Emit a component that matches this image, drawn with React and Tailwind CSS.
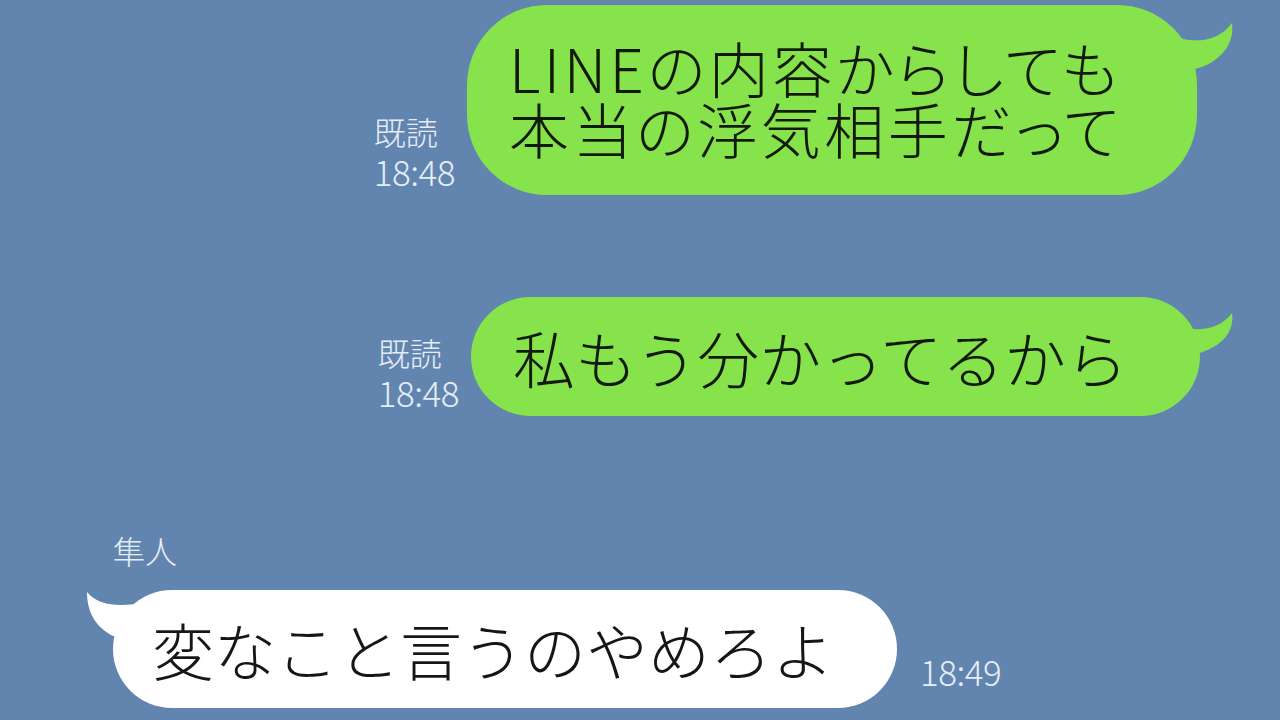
const Stamp = ({ read = false, time, className = '' }) => (
  <div className={`flex flex-col text-[#e6edf6] font-light ${className}`}>
    {read && <span className="text-[32px] leading-[39px]">既読</span>}
    <span className="text-[35px] leading-[39px] tracking-[-0.5px]">{time}</span>
  </div>
);

const RightTail = ({ d }) => (
  <svg className="absolute top-0 right-[-40px] w-[80px] h-[80px]" viewBox="0 0 80 80">
    <path d={d} fill="#86e34b" />
  </svg>
);

export default function App() {
  return (
    <div className="w-[1280px] h-[720px] overflow-hidden bg-[#6285b0] flex flex-col pt-[5px] font-['Noto_Sans_CJK_JP','Noto_Sans',sans-serif]">
      <div className="flex justify-end items-end pr-[83px]">
        <Stamp read time="18:48" className="mr-[12px] mb-[5px]" />
        <div className="relative w-[730px] h-[190px] rounded-[80px] bg-[#86e34b] pl-[42px] flex flex-col justify-center">
          <RightTail d="M 10 20 L 22 33 C 40 38, 62 36, 75 18 C 78 40, 62 58, 38 64 L 10 64 Z" />
          <p className="relative -mt-[6px] text-[60px] leading-[61px] font-light tracking-[3.5px] text-[#111a0c] [font-feature-settings:'palt']">
            LINEの内容からしても
            <br />
            本当の浮気相手だって
          </p>
        </div>
      </div>

      <div className="flex justify-end items-end pr-[80px] mt-[102px]">
        <Stamp read time="18:48" className="mr-[12px] mb-[5px]" />
        <div className="relative w-[729px] h-[119px] rounded-full bg-[#86e34b] pl-[42px] flex items-center">
          <RightTail d="M 10 30 L 24 31 C 42 34, 60 32, 72 16 C 75 38, 58 52, 32 58 L 10 58 Z" />
          <p className="relative text-[62px] leading-[62px] font-light text-[#111a0c]">
            私もう分かってるから
          </p>
        </div>
      </div>

      <div className="pl-[113px] mt-[114px] text-[32px] leading-[40px] font-light text-[#e6edf6]">
        隼人
      </div>

      <div className="flex items-end pl-[113px] mt-[20px]">
        <div className="relative w-[784px] h-[118px] rounded-full bg-white pl-[39px] flex items-center">
          <svg className="absolute top-[-10px] left-[-40px] w-[80px] h-[80px]" viewBox="0 0 80 80">
            <path d="M 72 18 L 62 24 C 45 26, 25 26, 14 12 C 14 35, 25 48, 40 56 L 75 56 Z" fill="#ffffff" />
          </svg>
          <p className="relative text-[62px] leading-[62px] font-light text-[#161616]">
            変なこと言うのやめろよ
          </p>
        </div>
        <Stamp time="18:49" className="ml-[23px] mb-[18px]" />
      </div>
    </div>
  );
}
